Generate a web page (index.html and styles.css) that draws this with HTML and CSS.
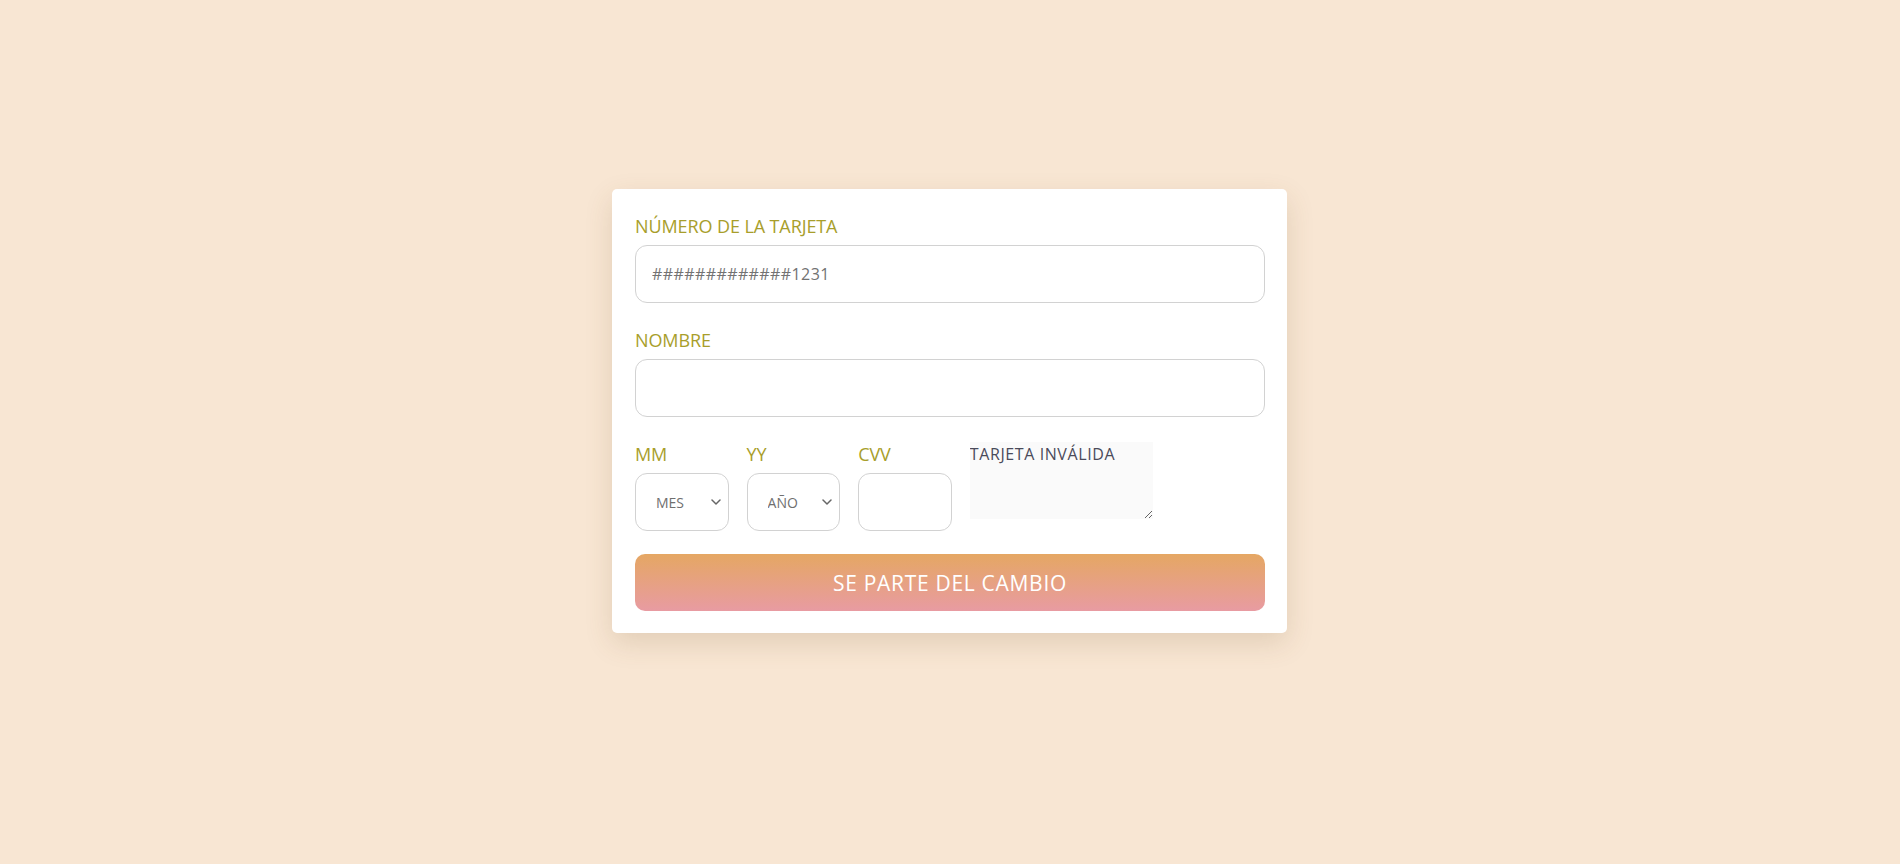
FILE: index.html
```html
<!DOCTYPE html>
<html lang="es">
<head>
<meta charset="utf-8">
<title>Tarjeta</title>
<link rel="stylesheet" href="styles.css">
</head>
<body>
<main class="page">
  <form class="card">
    <div class="field">
      <label class="label" for="num">NÚMERO DE LA TARJETA</label>
      <input class="input" id="num" type="text" placeholder="#############1231">
    </div>
    <div class="field">
      <label class="label" for="name">NOMBRE</label>
      <input class="input" id="name" type="text">
    </div>
    <div class="row">
      <div class="small">
        <label class="label" for="mm">MM</label>
        <div class="select-wrap">
          <select class="select" id="mm"><option>MES</option></select>
          <svg class="chevron" width="10" height="6" viewBox="0 0 10 6"><path d="M1 1l4 4 4-4" fill="none" stroke="#666" stroke-width="1.5" stroke-linecap="round" stroke-linejoin="round"/></svg>
        </div>
      </div>
      <div class="small">
        <label class="label" for="yy">YY</label>
        <div class="select-wrap">
          <select class="select" id="yy"><option>AÑO</option></select>
          <svg class="chevron" width="10" height="6" viewBox="0 0 10 6"><path d="M1 1l4 4 4-4" fill="none" stroke="#666" stroke-width="1.5" stroke-linecap="round" stroke-linejoin="round"/></svg>
        </div>
      </div>
      <div class="small">
        <label class="label" for="cvv">CVV</label>
        <input class="input input-small" id="cvv" type="text">
      </div>
      <textarea class="status">TARJETA INVÁLIDA</textarea>
    </div>
    <button class="submit" type="button">SE PARTE DEL CAMBIO</button>
  </form>
</main>
</body>
</html>
```

FILE: styles.css
```css
* { box-sizing: border-box; }

html, body {
  margin: 0;
  padding: 0;
}

body {
  background: #f8e6d3;
  font-family: "Open Sans", "Liberation Sans", sans-serif;
  min-height: 864px;
}

.page {
  display: flex;
  justify-content: center;
  padding-top: 189px;
  padding-right: 1px;
}

.card {
  width: 675px;
  background: #ffffff;
  border-radius: 5px;
  padding: 25px 22px 22px 23px;
  box-shadow: 0 10px 28px rgba(110, 80, 40, 0.16);
  display: flex;
  flex-direction: column;
}

.field {
  display: flex;
  flex-direction: column;
  margin-bottom: 25px;
}

.label {
  display: block;
  font-size: 18px;
  line-height: 24px;
  color: #a89e2b;
  letter-spacing: -0.1px;
  margin-bottom: 7px;
}

.input {
  width: 100%;
  height: 58px;
  border: 1px solid #d2d2d2;
  border-radius: 12px;
  background: #fff;
  padding: 0 16px;
  font-family: "Open Sans", "Liberation Sans", sans-serif;
  font-size: 16px;
  color: #555;
  letter-spacing: 0.4px;
  outline: none;
}

.input::placeholder {
  color: #727272;
}

.row {
  display: flex;
  align-items: flex-start;
  gap: 18px;
}

.small {
  width: 93.6px;
  display: flex;
  flex-direction: column;
}

.select-wrap {
  position: relative;
}

.select {
  appearance: none;
  -webkit-appearance: none;
  width: 100%;
  height: 58px;
  border: 1px solid #d2d2d2;
  border-radius: 12px;
  background: #fff;
  padding: 0 0 0 20px;
  font-family: "Open Sans", "Liberation Sans", sans-serif;
  font-size: 14px;
  color: #6f6f6f;
  outline: none;
}

.chevron {
  position: absolute;
  right: 8px;
  top: 26px;
  pointer-events: none;
}

.input-small {
  padding: 0 10px;
}

.status {
  width: 183px;
  height: 77px;
  border: none;
  background: #fafafa;
  padding: 0;
  margin: 0;
  font-family: "Open Sans", "Liberation Sans", sans-serif;
  font-size: 16px;
  line-height: 24px;
  letter-spacing: 0.6px;
  color: #4a4b5a;
  outline: none;
}

.submit {
  margin-top: 23px;
  height: 57px;
  width: 100%;
  border: none;
  border-radius: 10px;
  background: linear-gradient(to bottom, #e5a763, #e89ba2);
  color: #ffffff;
  font-family: "Open Sans", "Liberation Sans", sans-serif;
  font-size: 21px;
  letter-spacing: 0.7px;
  cursor: pointer;
}
```
